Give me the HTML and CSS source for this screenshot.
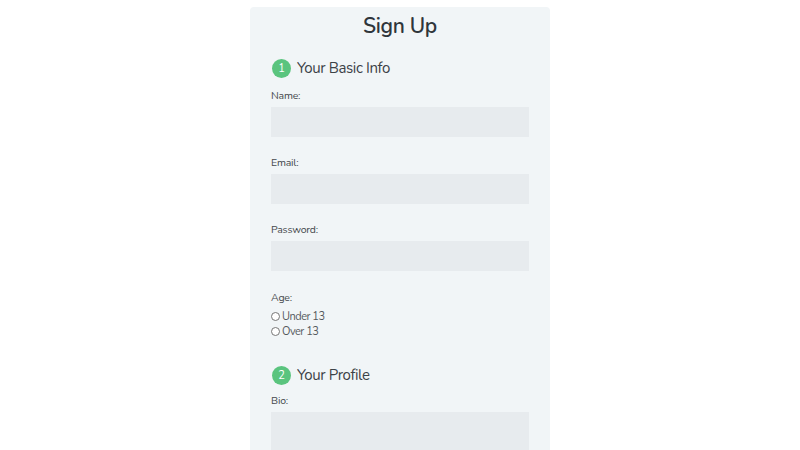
FILE: index.html
```html
<!DOCTYPE html>
<html lang="en">
<head>
    <meta charset="UTF-8">
    <meta name="viewport" content="width=device-width, initial-scale=1.0">
    <title>Sign Up</title>
    <link rel="stylesheet" href="styles.css">
</head>
<body>

    <form class="signup">
        <h1>Sign Up</h1>

        <!-- Stap 1 -->
        <h2 class="step"><span class="step-num">1</span>Your Basic Info</h2>

        <label class="field-label" for="name">Name:</label>
        <input type="text" id="name" class="field">

        <label class="field-label" for="email">Email:</label>
        <input type="email" id="email" class="field">

        <label class="field-label" for="password">Password:</label>
        <input type="password" id="password" class="field">

        <label class="field-label age-label">Age:</label>
        <label class="radio"><input type="radio" name="age" value="under"> Under 13</label>
        <label class="radio"><input type="radio" name="age" value="over"> Over 13</label>

        <!-- Stap 2 -->
        <h2 class="step step-two"><span class="step-num">2</span>Your Profile</h2>

        <label class="field-label" for="bio">Bio:</label>
        <textarea id="bio" class="field bio"></textarea>
    </form>

</body>
</html>
```

FILE: styles.css
```css
body {
    font-family: Nunito, Lato, "Open Sans", sans-serif;
    background-color: #ffffff;
    margin: 0;
    padding: 7px 0 0;
}

.signup {
    width: 258px;
    margin: 0 auto;
    padding: 0 21px 40px;
    background-color: #f1f5f7;
    border-radius: 4px;
}

h1 {
    margin: 0;
    text-align: center;
    font-size: 21px;
    font-weight: 600;
    letter-spacing: -0.3px;
    line-height: 38px;
    color: #2f353b;
}

.step {
    display: flex;
    align-items: center;
    margin: 11px 0 7px;
    font-size: 15px;
    font-weight: 400;
    letter-spacing: -0.4px;
    line-height: 24px;
    color: #3c4247;
}

.step-two {
    margin: 24px 0 5px;
}

.step-num {
    width: 19px;
    height: 19px;
    margin: 0 6px 0 1px;
    border-radius: 50%;
    background-color: #5ac47e;
    color: #ffffff;
    font-size: 11px;
    letter-spacing: 0;
    line-height: 19px;
    text-align: center;
}

.field-label {
    display: block;
    padding-top: 1px;
    margin-bottom: 3px;
    font-size: 10.5px;
    letter-spacing: -0.2px;
    line-height: 16px;
    color: #45494d;
}

.age-label {
    padding-top: 2px;
}

.field {
    display: block;
    width: 100%;
    height: 30px;
    margin: 0 0 17px;
    padding: 0 8px;
    box-sizing: border-box;
    border: none;
    outline: none;
    background-color: #e7ebee;
    font-family: inherit;
}

.bio {
    height: 80px;
    resize: none;
}

.radio {
    display: flex;
    align-items: center;
    font-size: 11px;
    letter-spacing: -0.5px;
    line-height: 15px;
    color: #55595d;
}

.radio input {
    width: 9px;
    height: 9px;
    margin: 0 2px 0 0;
}
```
